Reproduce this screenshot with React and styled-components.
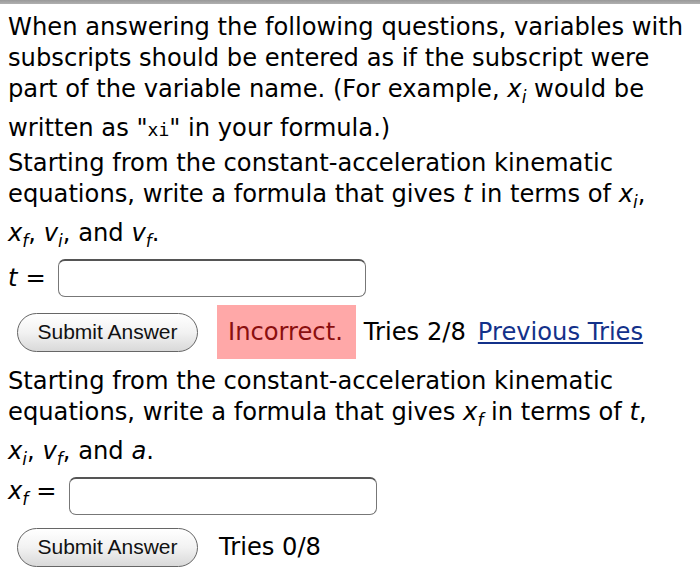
import React from "react";
import styled, { createGlobalStyle } from "styled-components";

const Global = createGlobalStyle`
  html, body {
    margin: 0;
    padding: 0;
    background: #ffffff;
  }
  body {
    font-family: "DejaVu Sans", Verdana, sans-serif;
    font-size: 24.2px;
    color: #000000;
  }
`;

const TopBar = styled.div`
  height: 4px;
  background: linear-gradient(#999999, #b0b0b0);
`;

const Page = styled.main`
  padding: 8px 8px 0 8px;
  width: 700px;
  box-sizing: border-box;
`;

const Para = styled.p`
  margin: 0 0 ${(p) => (p.$mb ?? 3)}px 0;
  line-height: 31px;
  white-space: nowrap;
`;

const Var = styled.i`
  font-style: italic;
  sub {
    font-size: 17px;
    line-height: 31px;
  }
`;

const Code = styled.code`
  font-family: "DejaVu Sans Mono", "Liberation Mono", monospace;
  font-size: 18px;
`;

const AnswerRow = styled.div`
  display: flex;
  align-items: center;
  gap: 12px;
`;

const Label = styled.span`
  display: inline-flex;
  align-items: baseline;
  gap: 8px;
`;

const Input = styled.input`
  width: ${(p) => p.$w}px;
  height: 38px;
  box-sizing: border-box;
  border: 1px solid #777;
  border-top: 2px solid #555;
  border-radius: 7px;
  background: #fff;
  font-size: 20px;
  outline: none;
`;

const SubmitRow = styled.div`
  display: flex;
  align-items: center;
  gap: 8px;
  min-height: 54px;
  margin: ${(p) => p.$mt}px 0 7px 0;
`;

const Button = styled.button`
  margin-left: 9px;
  margin-right: 11px;
  width: 181px;
  height: 39px;
  border: 1px solid #666;
  border-radius: 20px;
  background: linear-gradient(#ffffff 0%, #f2f2f2 50%, #d9d9d9 100%);
  font-family: "Liberation Sans", Arial, sans-serif;
  font-size: 21px;
  color: #111;
  padding: 0;
`;

const Feedback = styled.span`
  background: #ffa8a8;
  color: #8a0f0f;
  padding: 12px 13px 12px 11px;
  line-height: 30px;
`;

const Tries = styled.span`
  margin-left: ${(p) => p.$ml || 0}px;
`;

const Link = styled.a`
  color: #13318a;
  text-decoration: underline;
  margin-left: 4px;
`;

export default function App() {
  return (
    <>
      <Global />
      <TopBar />
      <Page>
        <Para>
          When answering the following questions, variables with
          <br />
          subscripts should be entered as if the subscript were
          <br />
          part of the variable name. (For example,{" "}
          <Var>
            x<sub>i</sub>
          </Var>{" "}
          would be
          <br />
          written as "<Code>xi</Code>" in your formula.)
        </Para>

        <Para>
          Starting from the constant-acceleration kinematic
          <br />
          equations, write a formula that gives <Var>t</Var> in terms of{" "}
          <Var>
            x<sub>i</sub>
          </Var>
          ,
          <br />
          <Var>
            x<sub>f</sub>
          </Var>
          ,{" "}
          <Var>
            v<sub>i</sub>
          </Var>
          , and{" "}
          <Var>
            v<sub>f</sub>
          </Var>
          .
        </Para>
        <AnswerRow>
          <Label>
            <Var>t</Var> =
          </Label>
          <Input $w={308} />
        </AnswerRow>
        <SubmitRow $mt={8}>
          <Button>Submit Answer</Button>
          <Feedback>Incorrect.</Feedback>
          <Tries>Tries 2/8</Tries>
          <Link href="#">Previous Tries</Link>
        </SubmitRow>

        <Para $mb={2}>
          Starting from the constant-acceleration kinematic
          <br />
          equations, write a formula that gives{" "}
          <Var>
            x<sub>f</sub>
          </Var>{" "}
          in terms of <Var>t</Var>,
          <br />
          <Var>
            x<sub>i</sub>
          </Var>
          ,{" "}
          <Var>
            v<sub>f</sub>
          </Var>
          , and <Var>a</Var>.
        </Para>
        <AnswerRow>
          <Label>
            <Var>
              x<sub>f</sub>
            </Var>{" "}
            =
          </Label>
          <Input $w={308} />
        </AnswerRow>
        <SubmitRow $mt={5}>
          <Button>Submit Answer</Button>
          <Tries $ml={2}>Tries 0/8</Tries>
        </SubmitRow>
      </Page>
    </>
  );
}
